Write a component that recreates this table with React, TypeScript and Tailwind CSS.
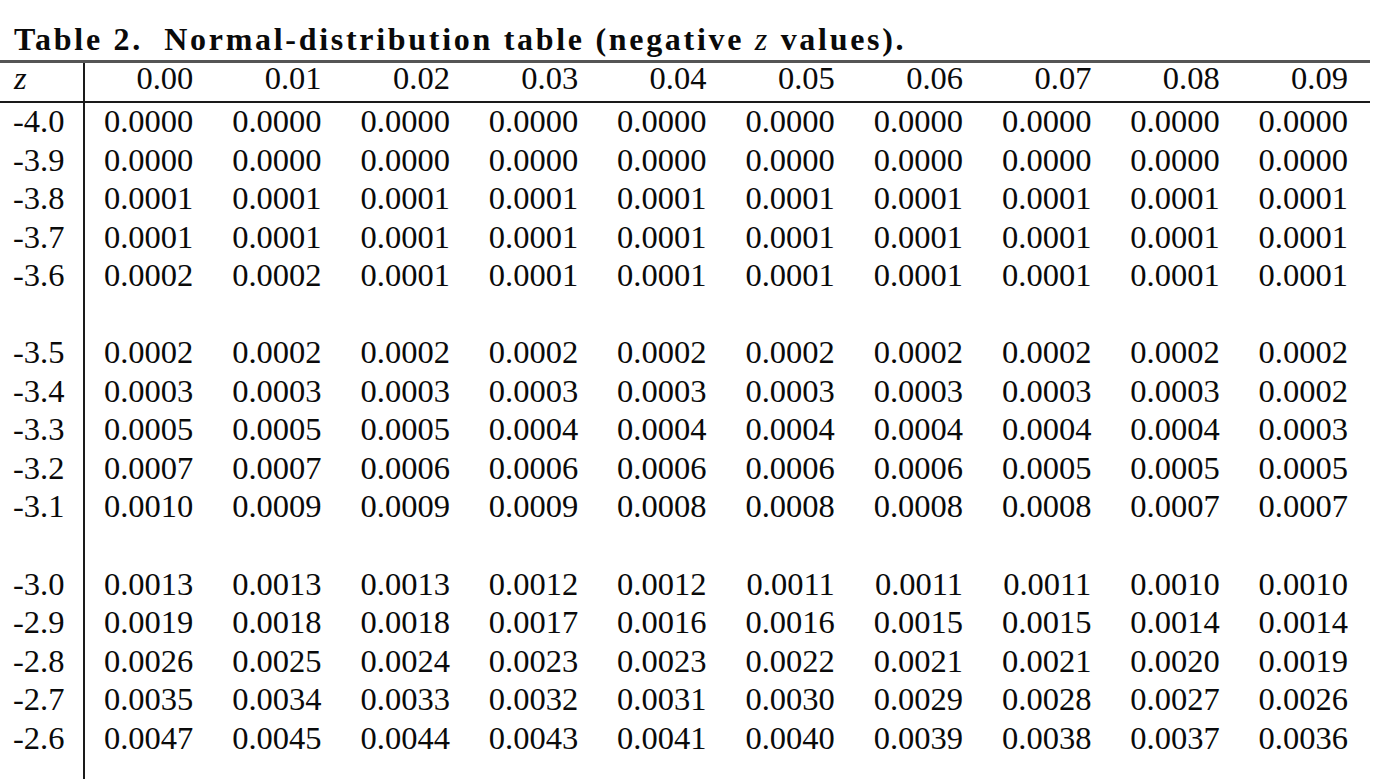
import React from "react";

const cols = ["0.00", "0.01", "0.02", "0.03", "0.04", "0.05", "0.06", "0.07", "0.08", "0.09"];

const rep = (v: string, n: number) => Array(n).fill(v);

type Row = { z: string; v: string[] } | null;

const rows: Row[] = [
  { z: "-4.0", v: rep("0.0000", 10) },
  { z: "-3.9", v: rep("0.0000", 10) },
  { z: "-3.8", v: rep("0.0001", 10) },
  { z: "-3.7", v: rep("0.0001", 10) },
  { z: "-3.6", v: ["0.0002", "0.0002", ...rep("0.0001", 8)] },
  null,
  { z: "-3.5", v: rep("0.0002", 10) },
  { z: "-3.4", v: [...rep("0.0003", 9), "0.0002"] },
  { z: "-3.3", v: ["0.0005", "0.0005", "0.0005", "0.0004", "0.0004", "0.0004", "0.0004", "0.0004", "0.0004", "0.0003"] },
  { z: "-3.2", v: ["0.0007", "0.0007", "0.0006", "0.0006", "0.0006", "0.0006", "0.0006", "0.0005", "0.0005", "0.0005"] },
  { z: "-3.1", v: ["0.0010", "0.0009", "0.0009", "0.0009", "0.0008", "0.0008", "0.0008", "0.0008", "0.0007", "0.0007"] },
  null,
  { z: "-3.0", v: ["0.0013", "0.0013", "0.0013", "0.0012", "0.0012", "0.0011", "0.0011", "0.0011", "0.0010", "0.0010"] },
  { z: "-2.9", v: ["0.0019", "0.0018", "0.0018", "0.0017", "0.0016", "0.0016", "0.0015", "0.0015", "0.0014", "0.0014"] },
  { z: "-2.8", v: ["0.0026", "0.0025", "0.0024", "0.0023", "0.0023", "0.0022", "0.0021", "0.0021", "0.0020", "0.0019"] },
  { z: "-2.7", v: ["0.0035", "0.0034", "0.0033", "0.0032", "0.0031", "0.0030", "0.0029", "0.0028", "0.0027", "0.0026"] },
  { z: "-2.6", v: ["0.0047", "0.0045", "0.0044", "0.0043", "0.0041", "0.0040", "0.0039", "0.0038", "0.0037", "0.0036"] },
  null,
  null,
];

export default function App() {
  return (
    <div
      className="w-[1376px] h-[779px] overflow-hidden bg-white text-[#0a0a0a]"
      style={{ fontFamily: '"Liberation Serif", "Times New Roman", serif' }}
    >
      <div className="pt-[21px] pl-[14px] h-[60px] text-[32px] leading-[36px] font-bold tracking-[2.7px] whitespace-nowrap">
        Table 2.&nbsp; Normal-distribution table (negative <span className="italic font-normal">z</span> values).
      </div>
      <div className="w-[1370px] border-t-[3px] border-[#555]">
        <div className="flex h-[38px] text-[32.5px] leading-[31px]">
          <div className="w-[85px] shrink-0 border-r-2 border-[#1a1a1a] pl-[14px] italic">z</div>
          <div className="grid grid-cols-[repeat(10,128.3px)]">
            {cols.map((c) => (
              <div key={c} className="text-right pr-[20px]">
                {c}
              </div>
            ))}
          </div>
        </div>
        <div className="border-t-2 border-[#1a1a1a]">
          {rows.map((r, i) => (
            <div key={i} className="flex h-[38.56px] text-[32.5px] leading-[36.5px]">
              <div className="w-[85px] shrink-0 border-r-2 border-[#1a1a1a] pl-[13px]">{r ? r.z : ""}</div>
              <div className="grid grid-cols-[repeat(10,128.3px)]">
                {r
                  ? r.v.map((v, j) => (
                      <div key={j} className="text-right pr-[20px]">
                        {v}
                      </div>
                    ))
                  : null}
              </div>
            </div>
          ))}
        </div>
      </div>
    </div>
  );
}
